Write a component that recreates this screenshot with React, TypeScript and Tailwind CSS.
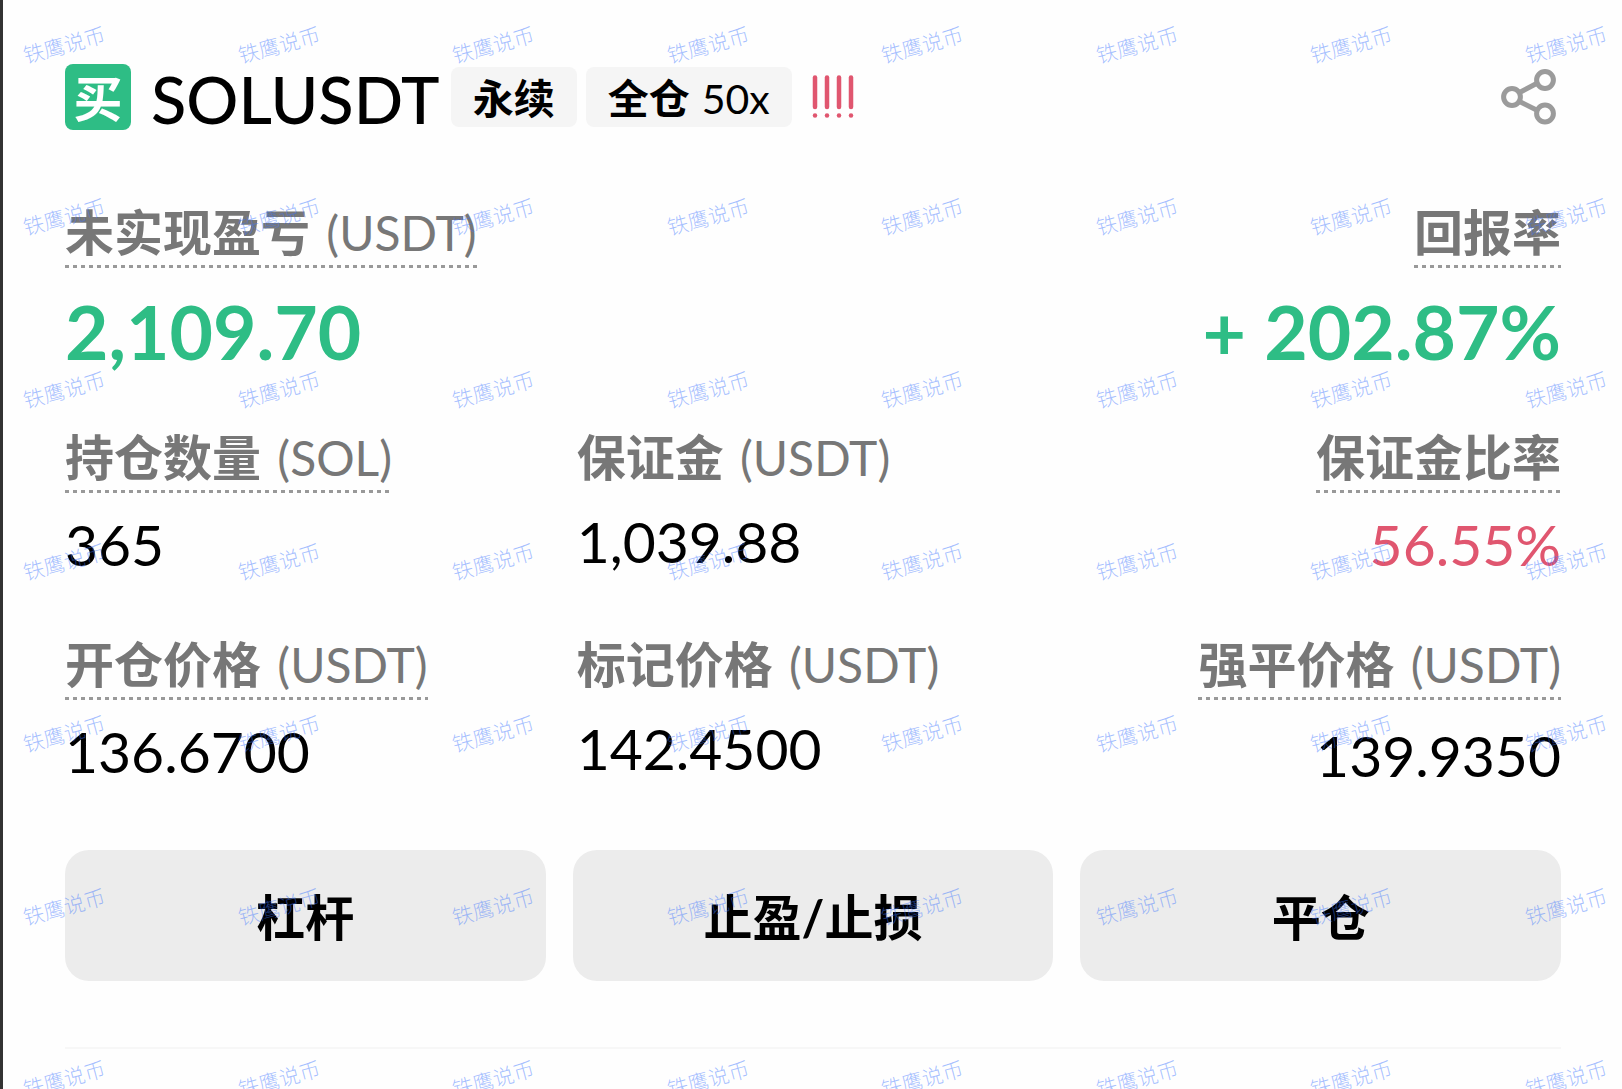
import React from "react";

type MetricProps = {
  label: string;
  unit?: string;
  value: string;
  hint?: boolean;
  align?: "left" | "right";
  tone?: string;
  className?: string;
};

const DOTS =
  "h-[3px] bg-[repeating-linear-gradient(90deg,#999_0_4px,transparent_4px_8px)]";

function Label({ label, unit, hint = true }: Pick<MetricProps, "label" | "unit" | "hint">) {
  return (
    <dt className="w-fit whitespace-nowrap text-[#777]">
      <div className="h-[70px] leading-[74px]">
        <span className="text-[49px] font-bold">{label}</span>
        {unit && <span className="ml-1 text-[48px]"> ({unit})</span>}
      </div>
      {hint && <div className={DOTS} />}
    </dt>
  );
}

function Metric({
  label,
  unit,
  value,
  hint = true,
  align = "left",
  tone = "text-black",
  className = "mt-4",
}: MetricProps) {
  const side = align === "right" ? "items-end text-right" : "items-start";
  return (
    <div className={`flex flex-col ${side} ${hint ? "" : "pl-1"}`}>
      <Label label={label} unit={unit} hint={hint} />
      <dd className={`text-[57px] leading-[70px] ${tone} ${className}`}>{value}</dd>
    </div>
  );
}

function ShareIcon() {
  return (
    <svg viewBox="0 0 56 56" className="size-14" fill="none" stroke="#9b9b9b" strokeWidth="5" aria-hidden="true">
      <circle cx="11" cy="28" r="8.4" />
      <circle cx="44" cy="11" r="8.4" />
      <circle cx="44" cy="44.5" r="8.4" />
      <path d="M18.5 23.5 36.5 14M18.5 32.5 36.5 41.5" />
    </svg>
  );
}

function RiskBars() {
  return (
    <svg viewBox="0 0 42 44" className="ml-5 h-11 w-[42px]" role="img" aria-label="风险等级">
      {[3, 15, 27, 39].map((x) => (
        <g key={x} stroke="#e0566f" strokeWidth="4.5" strokeLinecap="round">
          <path d={`M${x} 2.500V32`} />
          <path d={`M${x} 40.500V40.501`} />
        </g>
      ))}
    </svg>
  );
}

function Watermark() {
  return (
    <div
      aria-hidden="true"
      className="pointer-events-none absolute -top-[42px] -right-[51px] -bottom-[76px] -left-[46px] grid grid-cols-8 grid-rows-7 select-none"
    >
      {Array.from({ length: 56 }, (_, i) => (
        <span key={i} className="flex items-center justify-center">
          <span className="-rotate-15 text-[21px] leading-none font-light whitespace-nowrap text-[#3b74ff]/45">
            铁鹰说币
          </span>
        </span>
      ))}
    </div>
  );
}

const ACTIONS = ["杠杆", "止盈/止损", "平仓"];

export default function App() {
  return (
    <main className="relative min-h-screen overflow-hidden border-l-[3px] border-[#333] bg-[#fefefe] pr-[61px] pl-[62px] font-['Lato','Noto_Sans_CJK_SC',sans-serif] text-black">
      <header className="flex items-center pt-16">
        <span className="flex size-[66px] items-center justify-center rounded-lg bg-[#2ebd85] pt-0.5 text-[49px] leading-none font-bold text-white">
          买
        </span>
        <h1 className="ml-5 pt-1 text-[65px] leading-[62px] font-medium">SOLUSDT</h1>
        <span className="ml-[11px] flex h-[60px] items-center rounded-lg bg-[#f5f5f5] px-[22px] pt-0.5 text-[41px] leading-none font-bold">
          永续
        </span>
        <span className="ml-[9px] flex h-[60px] items-center gap-3 rounded-lg bg-[#f5f5f5] px-[22px] pt-0.5 text-[41px] leading-none font-bold">
          全仓 <span className="font-normal">50x</span>
        </span>
        <RiskBars />
        <button type="button" aria-label="分享" className="mr-1 ml-auto">
          <ShareIcon />
        </button>
      </header>

      <dl className="mt-[65px] flex justify-between">
        <div>
          <Label label="未实现盈亏" unit="USDT" />
          <dd className="mt-5 text-[75px] leading-[86px] font-bold text-[#2ebd85]">2,109.70</dd>
        </div>
        <div className="flex flex-col items-end">
          <Label label="回报率" />
          <dd className="mt-5 text-[75px] leading-[86px] font-bold text-[#2ebd85]">+ 202.87%</dd>
        </div>
      </dl>

      <dl className="mt-[46px] grid grid-cols-3 gap-x-[27px] gap-y-12">
        <Metric label="持仓数量" unit="SOL" value="365" />
        <Metric label="保证金" unit="USDT" value="1,039.88" hint={false} />
        <Metric label="保证金比率" value="56.55%" align="right" tone="text-[#e0566f]" />
        <Metric label="开仓价格" unit="USDT" value="136.6700" />
        <Metric label="标记价格" unit="USDT" value="142.4500" hint={false} />
        <Metric label="强平价格" unit="USDT" value="139.9350" align="right" className="mt-5" />
      </dl>

      <div className="mt-[60px] grid grid-cols-3 gap-[27px]">
        {ACTIONS.map((name) => (
          <button
            key={name}
            type="button"
            className="h-[131px] rounded-3xl bg-[#ececec] pt-1 text-[49px] font-bold"
          >
            {name}
          </button>
        ))}
      </div>
      <hr className="mt-[66px] border-t-2 border-[#f7f7f7]" />
      <Watermark />
    </main>
  );
}
